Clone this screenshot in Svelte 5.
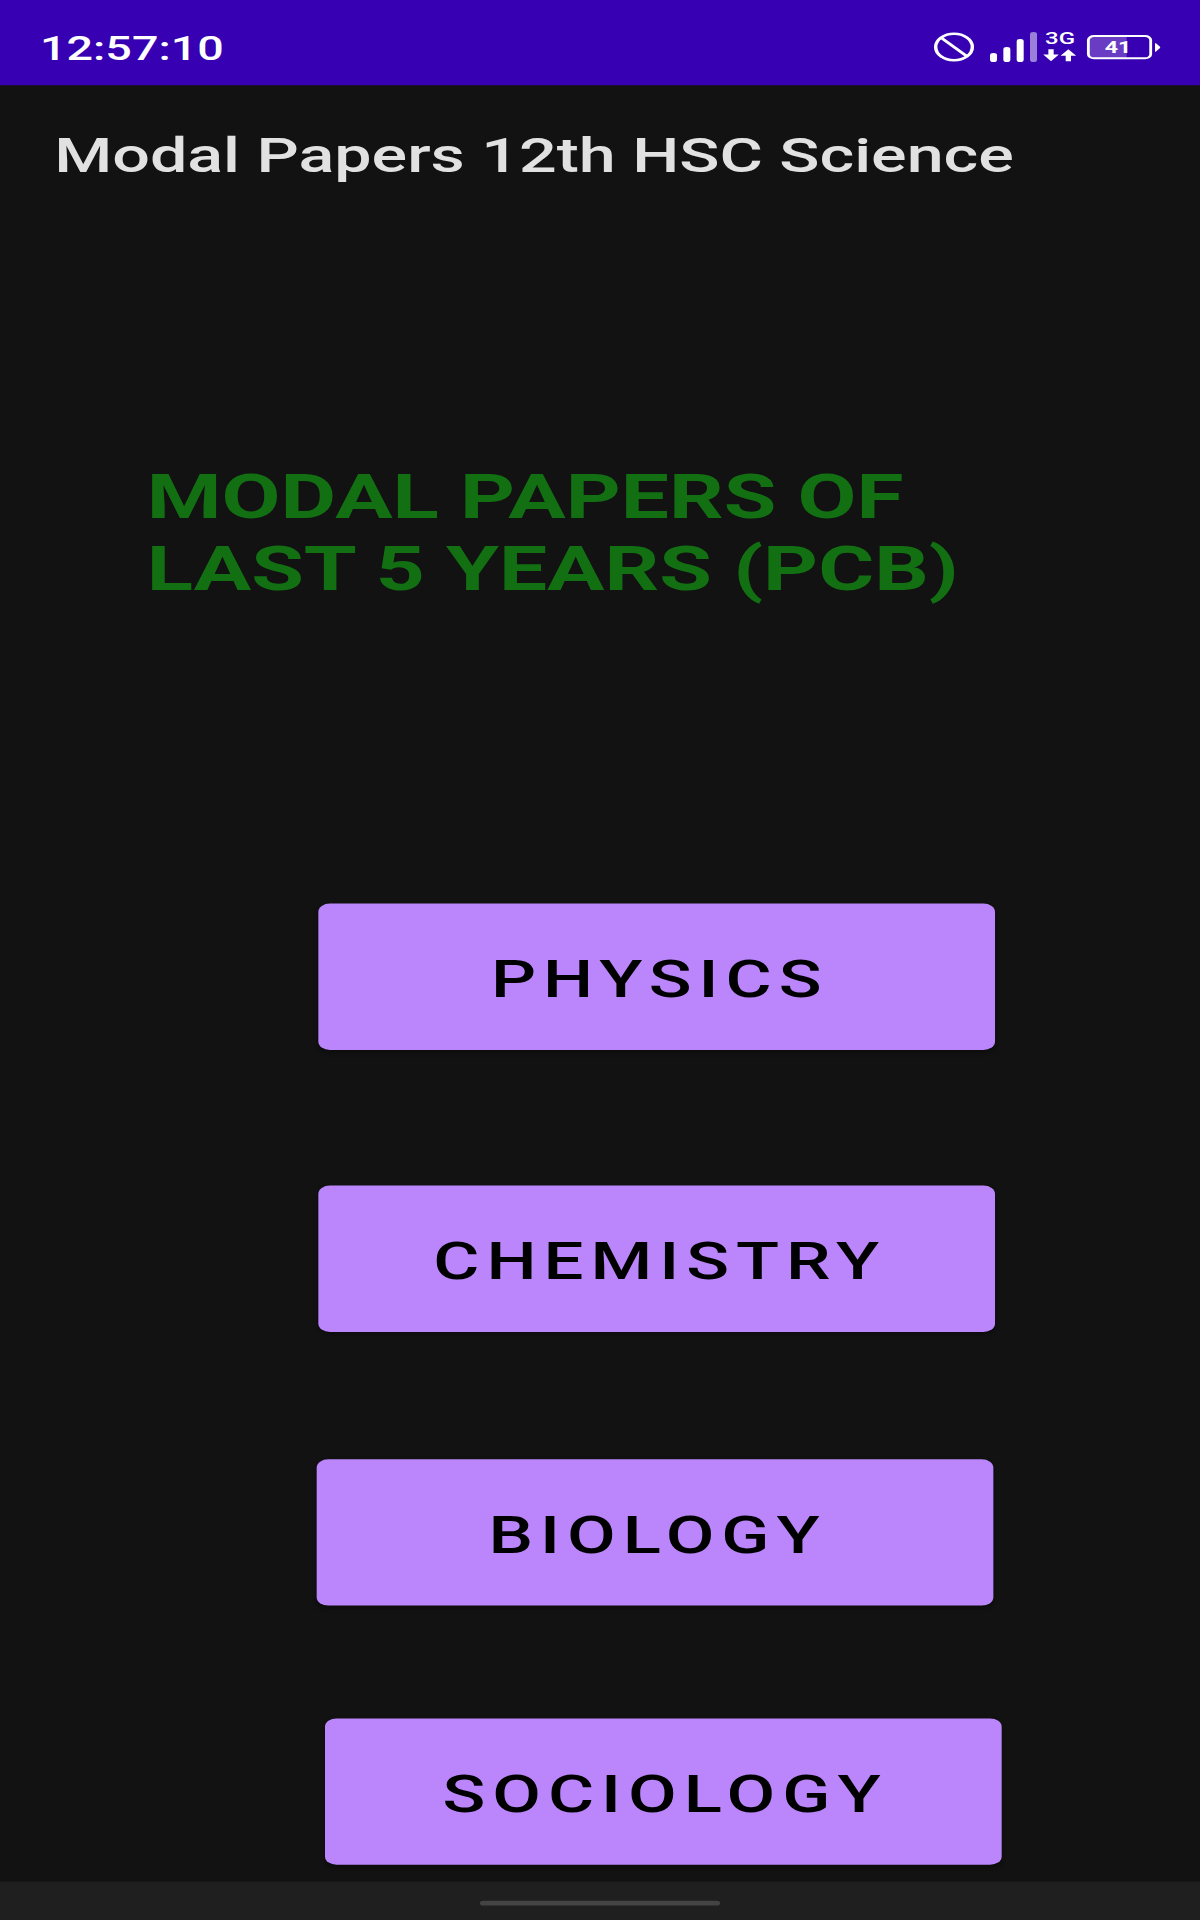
<script lang="ts">
const subjects = [
	{ name: "PHYSICS", cls: "physics" },
	{ name: "CHEMISTRY", cls: "chemistry" },
	{ name: "BIOLOGY", cls: "biology" },
	{ name: "SOCIOLOGY", cls: "sociology" },
];
</script>

<div class="frame">
  <!-- Capture is a 720x1600 phone frame stretched onto 1200x1920 -->
  <div class="screen">
    <header class="status-bar">
      <span class="clock">12:57:10</span>
      <svg class="status-icons" viewBox="0 0 141 71" width="141" height="71" aria-hidden="true">
        <!-- do not disturb -->
        <circle cx="14.4" cy="39.2" r="11" fill="none" stroke="#fff" stroke-width="2.1" />
        <path d="M6.8 31.6L22 46.8" stroke="#fff" stroke-width="2.1" />
        <!-- signal -->
        <rect x="36" y="44.2" width="4.2" height="7.5" rx="2" fill="#fff" />
        <rect x="44" y="39.2" width="4.2" height="12.5" rx="2" fill="#fff" />
        <rect x="52" y="32.5" width="4.2" height="19.2" rx="2" fill="#fff" />
        <rect x="60" y="26.7" width="4.2" height="25" rx="2" fill="#fff" opacity="0.5" />
        <!-- network -->
        <text class="net" x="78" y="36.7" text-anchor="middle" textLength="18" lengthAdjust="spacingAndGlyphs">3G</text>
        <path d="M71 41h3.2v4.5h3.1l-4.7 5.5l-4.7-5.5h3.1z" fill="#fff" />
        <path d="M81.4 51v-4.5h-3.1l4.7-5.5l4.7 5.5h-3.1V51z" fill="#fff" />
        <!-- battery -->
        <path d="M98 30h20v18.6H98a3 3 0 0 1-3-3V33a3 3 0 0 1 3-3z" fill="#6a3cc4" />
        <rect x="95" y="30" width="37.4" height="18.6" rx="3.4" fill="none" stroke="#fff" stroke-width="1.7" />
        <text class="level" x="112.8" y="44.3" text-anchor="middle" textLength="16" lengthAdjust="spacingAndGlyphs">41</text>
        <path d="M135 36v7.2a1 1 0 0 0 .6-.2l2.4-3a1 1 0 0 0 0-1l-2.4-3a1 1 0 0 0-.6 0z" fill="#fff" />
      </svg>
    </header>

    <main class="content">
      <h1 class="app-title">Modal Papers 12th HSC Science</h1>
      <h2 class="heading">MODAL PAPERS OF<br />LAST 5 YEARS (PCB)</h2>

      <div class="subject-list">
        {#each subjects as subject}
          <button type="button" class="subject-btn {subject.cls}">{subject.name}</button>
        {/each}
      </div>
    </main>

    <nav class="nav-bar">
      <span class="nav-pill"></span>
    </nav>
  </div>
</div>

<style>
  :global(body) {
    background: #121212;
  }

  .frame {
    width: 1200px;
    height: 1920px;
    overflow: hidden;
  }

  .screen {
    width: 720px;
    height: 1600px;
    display: flex;
    flex-direction: column;
    background: #121212;
    font-family: Roboto, "Liberation Sans", sans-serif;
    transform: scale(1.6667, 1.2);
    transform-origin: 0 0;
  }

  .status-bar {
    height: 71px;
    flex-shrink: 0;
    display: flex;
    align-items: center;
    justify-content: space-between;
    padding: 0 21px 0 24px;
    background: #3700b3;
  }

  .clock {
    margin-top: 10px;
    font-size: 28px;
    font-weight: 500;
    color: #fff;
  }

  .status-icons {
    display: block;
  }

  .net {
    font-size: 14.5px;
    font-weight: 500;
    fill: #fff;
  }

  .level {
    font-size: 14px;
    font-weight: 700;
    fill: #fff;
  }

  .content {
    flex: 1;
    min-height: 0;
    padding-top: 35px;
  }

  .app-title {
    margin: 0 0 0 32.5px;
    font-size: 39.85px;
    line-height: 48px;
    font-weight: 500;
    color: #e1e1e1;
  }

  .heading {
    margin: 231px 0 0 88px;
    font-size: 51.3px;
    line-height: 60px;
    font-weight: 700;
    color: #127013;
  }

  .subject-list {
    display: flex;
    flex-direction: column;
    align-items: flex-start;
    margin-top: 248px;
  }

  .subject-btn {
    width: 406px;
    height: 122px;
    padding: 5px 0 0 3px;
    border: none;
    border-radius: 7px;
    background: #bb86fc;
    color: #000;
    font-family: inherit;
    font-size: 42.4px;
    font-weight: 500;
    letter-spacing: 4.2px;
    box-shadow: 0 2px 3px rgba(0, 0, 0, 0.3);
  }

  .physics {
    margin-left: 191.3px;
  }

  .chemistry {
    margin: 113px 0 0 191.3px;
  }

  .biology {
    margin: 106px 0 0 190px;
  }

  .sociology {
    margin: 94px 0 0 194.5px;
  }

  .nav-bar {
    height: 32px;
    flex-shrink: 0;
    display: flex;
    justify-content: center;
    padding-top: 16px;
    box-sizing: border-box;
    background: #1f1f1f;
  }

  .nav-pill {
    width: 144px;
    height: 4px;
    border-radius: 2px;
    background: #444;
  }
</style>
